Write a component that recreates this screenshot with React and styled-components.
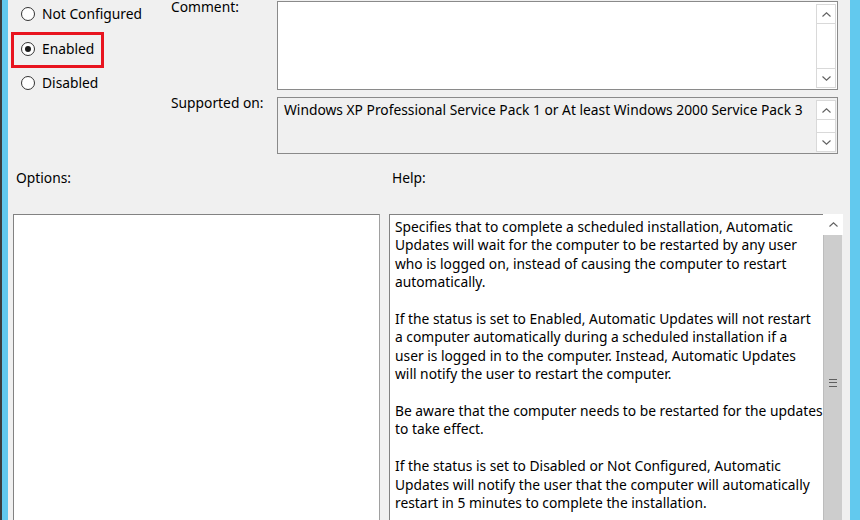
import styled, { createGlobalStyle } from 'styled-components';

const GlobalStyle = createGlobalStyle`
  html, body {
    margin: 0;
    padding: 0;
    height: 100%;
    overflow: hidden;
    background: #f0f0f0;
  }
  body {
    font-family: "Noto Sans", "Open Sans", sans-serif;
    font-size: 13.8px;
    color: #000;
  }
`;

const HELP = [
  [
    'Specifies that to complete a scheduled installation, Automatic',
    'Updates will wait for the computer to be restarted by any user',
    'who is logged on, instead of causing the computer to restart',
    'automatically.',
  ],
  [
    'If the status is set to Enabled, Automatic Updates will not restart',
    'a computer automatically during a scheduled installation if a',
    'user is logged in to the computer. Instead, Automatic Updates',
    'will notify the user to restart the computer.',
  ],
  [
    'Be aware that the computer needs to be restarted for the updates',
    'to take effect.',
  ],
  [
    'If the status is set to Disabled or Not Configured, Automatic',
    'Updates will notify the user that the computer will automatically',
    'restart in 5 minutes to complete the installation.',
  ],
];

const Chevron = ({ up }) => (
  <svg width="9" height="5" viewBox="0 0 9 5">
    <path
      d={up ? 'M0.5 4.5 L4.5 0.8 L8.5 4.5' : 'M0.5 0.5 L4.5 4.2 L8.5 0.5'}
      fill="none"
      stroke="#606060"
      strokeWidth="1.1"
    />
  </svg>
);

export default function App() {
  return (
    <Window>
      <GlobalStyle />
      <EdgeLeft />
      <Body>
        <TopSection>
          <StateGroup>
            <RadioRow>
              <Radio />
              Not Configured
            </RadioRow>
            <RadioRow $highlight>
              <Radio $checked />
              Enabled
            </RadioRow>
            <RadioRow>
              <Radio />
              Disabled
            </RadioRow>
          </StateGroup>

          <FieldGrid>
            <FieldLabel>Comment:</FieldLabel>
            <TextBox $height={89}>
              <BoxText />
              <ScrollColumn>
                <ArrowButton><Chevron up /></ArrowButton>
                <ArrowButton><Chevron /></ArrowButton>
              </ScrollColumn>
            </TextBox>

            <FieldLabel>Supported on:</FieldLabel>
            <TextBox $height={57} $readonly>
              <BoxText>
                Windows XP Professional Service Pack 1 or At least Windows 2000 Service Pack 3
              </BoxText>
              <ScrollColumn $gap>
                <ArrowButton><Chevron up /></ArrowButton>
                <ArrowButton><Chevron /></ArrowButton>
              </ScrollColumn>
            </TextBox>
          </FieldGrid>
        </TopSection>

        <BottomSection>
          <SectionLabel>Options:</SectionLabel>
          <SectionLabel>Help:</SectionLabel>
          <Pane />
          <Pane>
            <HelpText>
              {HELP.map((para, i) => (
                <Paragraph key={i}>
                  {para.map((line) => (
                    <Line key={line}>{line}</Line>
                  ))}
                </Paragraph>
              ))}
            </HelpText>
            <VScroll>
              <ArrowButton $solid><Chevron up /></ArrowButton>
              <Thumb>
                <Grip />
              </Thumb>
            </VScroll>
          </Pane>
        </BottomSection>
      </Body>
      <EdgeRight />
    </Window>
  );
}

const Window = styled.div`
  display: flex;
  height: 520px;
  width: 860px;
  overflow: hidden;
`;

const EdgeLeft = styled.div`
  width: 6px;
  flex: none;
  border-left: 2px solid #3c3c3c;
  background: #62c9ee;
`;

const EdgeRight = styled.div`
  flex: 1;
  background: #62c9ee;
`;

const Body = styled.div`
  width: 842px;
  flex: none;
  display: flex;
  flex-direction: column;
`;

const TopSection = styled.div`
  display: flex;
`;

const StateGroup = styled.div`
  width: 150px;
  padding-left: 13px;
  margin-top: -3px;
  display: flex;
  flex-direction: column;
`;

const RadioRow = styled.label`
  position: relative;
  display: flex;
  align-items: center;
  height: 34.5px;
  line-height: 18px;
  white-space: nowrap;

  ${({ $highlight }) =>
    $highlight &&
    `
    &::after {
      content: "";
      position: absolute;
      left: -10px;
      top: 0;
      width: 87px;
      height: 30px;
      border: 3px solid #e8141f;
    }
  `}
`;

const Radio = styled.span`
  width: 12px;
  height: 12px;
  border: 1px solid #333;
  border-radius: 50%;
  background: #fff;
  margin-right: 7px;
  position: relative;
  flex: none;

  ${({ $checked }) =>
    $checked &&
    `
    &::after {
      content: "";
      position: absolute;
      left: 3px;
      top: 3px;
      width: 6px;
      height: 6px;
      border-radius: 50%;
      background: #1a1a1a;
    }
  `}
`;

const FieldGrid = styled.div`
  display: grid;
  grid-template-columns: 106px 561px;
  row-gap: 7px;
  margin-top: 1px;
`;

const FieldLabel = styled.div`
  line-height: 18px;
  margin-top: -3px;
  white-space: nowrap;
`;

const TextBox = styled.div`
  height: ${({ $height }) => $height}px;
  box-sizing: border-box;
  border: 1px solid #8a8a8a;
  background: ${({ $readonly }) => ($readonly ? '#f0f0f0' : '#fff')};
  display: flex;
  padding: 2px 1px 1px 0;
`;

const BoxText = styled.div`
  flex: 1;
  padding: 1px 0 0 6px;
  line-height: 18px;
  white-space: nowrap;
  overflow: hidden;
`;

const ScrollColumn = styled.div`
  width: 20px;
  box-sizing: border-box;
  border: 1px solid #d9d9d9;
  background: #fff;
  display: flex;
  flex-direction: column;
  justify-content: space-between;
  gap: ${({ $gap }) => ($gap ? '7px' : '0')};
`;

const ArrowButton = styled.div`
  height: 20px;
  box-sizing: border-box;
  flex: none;
  display: flex;
  align-items: center;
  justify-content: center;
  background: #fff;
  border: 1px solid #d9d9d9;
  margin: -1px;

  ${({ $solid }) =>
    $solid &&
    `
    margin: 0;
    height: 21px;
    border: none;
  `}
`;

const BottomSection = styled.div`
  display: grid;
  grid-template-columns: 367px 454px;
  grid-template-rows: 18px 310px;
  column-gap: 9px;
  row-gap: 27px;
  padding-left: 5px;
  margin-top: 15px;
`;

const SectionLabel = styled.div`
  line-height: 18px;
  padding-left: 3px;
`;

const Pane = styled.div`
  box-sizing: border-box;
  border: 1px solid #828282;
  border-right-color: #a0a0a0;
  background: #fff;
  display: flex;
`;

const HelpText = styled.div`
  flex: 1;
  padding: 3px 0 0 5px;
  line-height: 18.4px;
  white-space: nowrap;
  overflow: hidden;
`;

const Paragraph = styled.div`
  margin-bottom: 18.4px;
`;

const Line = styled.div``;

const VScroll = styled.div`
  width: 20px;
  flex: none;
  background: #f0f0f0;
  display: flex;
  flex-direction: column;
  margin-right: -1px;
  margin-top: -1px;
`;

const Thumb = styled.div`
  flex: 1;
  margin: 0 1px 0 0;
  background: #cdcdcd;
  border-left: 1px solid #bcbcbc;
  display: flex;
  justify-content: center;
  padding-top: 144px;
`;

const Grip = styled.div`
  width: 8px;
  height: 6px;
  border-top: 1px solid #5f5f5f;
  border-bottom: 1px solid #5f5f5f;
  position: relative;

  &::after {
    content: "";
    position: absolute;
    left: 0;
    right: 0;
    top: 2px;
    border-top: 1px solid #5f5f5f;
  }
`;
